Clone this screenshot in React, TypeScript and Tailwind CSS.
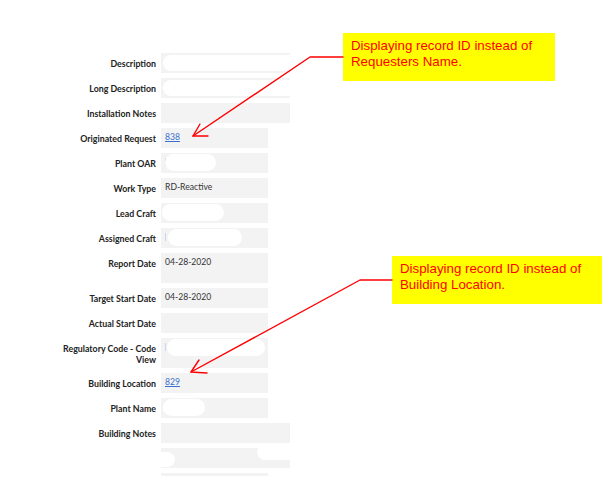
import React from 'react'

type Field = {
  label: string
  value?: string
  link?: boolean
  wide?: boolean
  tall?: boolean
  pill?: { left: number; width: number; tick?: boolean }
  cover?: boolean
  redacted?: boolean
  clip?: boolean
}

const fields: Field[] = [
  { label: 'Description', wide: true, cover: true },
  { label: 'Long Description', wide: true, cover: true },
  { label: 'Installation Notes', wide: true },
  { label: 'Originated Request', value: '838', link: true },
  { label: 'Plant OAR', pill: { left: 4, width: 51, tick: true } },
  { label: 'Work Type', value: 'RD-Reactive' },
  { label: 'Lead Craft', pill: { left: 1, width: 62 } },
  { label: 'Assigned Craft', pill: { left: 7, width: 74, tick: true } },
  { label: 'Report Date', value: '04-28-2020', tall: true },
  { label: 'Target Start Date', value: '04-28-2020' },
  { label: 'Actual Start Date' },
  { label: 'Regulatory Code - Code View', tall: true, pill: { left: 6, width: 98, tick: true } },
  { label: 'Building Location', value: '829', link: true },
  { label: 'Plant Name', pill: { left: 2, width: 42 } },
  { label: 'Building Notes', wide: true },
  { label: '', wide: true, redacted: true },
  { label: '', clip: true },
]

function Row({ f }: { f: Field }) {
  const h = f.clip ? 'h-[3px]' : f.tall ? 'h-[30px]' : 'h-[20px]'
  return (
    <div className="relative flex gap-[5px]">
      <div className="ml-[56px] w-[100px] pt-[5px] text-right text-[8.8px] font-bold leading-[11px] text-[#222]">
        {f.label}
      </div>
      <div className={`relative ${f.wide ? 'w-[129px]' : 'w-[107px]'} ${h} bg-[#f3f3f3]`}>
        {f.cover && (
          <div className="absolute left-[2px] right-0 top-[2px] bottom-[2px] rounded-l-full bg-white" />
        )}
        {f.pill && (
          <>
            {f.pill.tick && <div className="absolute left-[4px] top-[5px] h-[8px] w-px bg-[#c9d6ee]" />}
            <div
              className="absolute top-[1px] h-[17px] rounded-full bg-white blur-[0.6px]"
              style={{ left: f.pill.left, width: f.pill.width }}
            />
          </>
        )}
        {f.value && (
          <div
            className={`px-[4px] pt-[3px] text-[8.6px] leading-[12px] ${
              f.link ? 'text-[#3a6fd0] underline' : 'text-[#333]'
            }`}
          >
            {f.value}
          </div>
        )}
        {f.redacted && (
          <div className="absolute -top-[3px] left-[96px] h-[15px] w-[50px] rounded-full bg-white blur-[0.6px]" />
        )}
      </div>
      {f.redacted && (
        <div className="absolute left-[70px] top-[4px] h-[15px] w-[105px] rounded-full bg-white blur-[0.6px]" />
      )}
    </div>
  )
}

function Note({ lines }: { lines: string[] }) {
  return (
    <div
      className="h-[48px] w-[212px] bg-[#ffff00] px-[8px] pt-[5px] text-[13.3px] leading-[16px] text-[#ff0000]"
      style={{ fontFamily: '"Liberation Sans", Arial, sans-serif' }}
    >
      {lines[0]}
      <br />
      {lines[1]}
    </div>
  )
}

export default function App() {
  return (
    <div
      className="relative h-[500px] w-[602px] overflow-hidden bg-white"
      style={{ fontFamily: 'Lato, "Open Sans", sans-serif' }}
    >
      <div className="flex flex-col gap-[5px] pt-[53px]">
        {fields.map((f, i) => (
          <Row key={i} f={f} />
        ))}
      </div>

      {/* callouts laid over the screenshot */}
      <div className="absolute left-[343px] top-[33px]">
        <Note lines={['Displaying record ID instead of', 'Requesters Name.']} />
      </div>
      <div className="absolute left-[392px] top-[256px]">
        <Note lines={['Displaying record ID instead of', 'Building Location.']} />
      </div>

      <svg className="pointer-events-none absolute inset-0" width="602" height="500" fill="none">
        <g stroke="#ff0000" strokeWidth="1.4" strokeLinecap="round" strokeLinejoin="round">
          <polyline points="343,57 310,57 193,136" />
          <polyline points="200,124 193,136 208,136" />
          <polyline points="392,280 360,280 191,372" />
          <polyline points="199,360 191,372 207,373" />
        </g>
      </svg>
    </div>
  )
}
